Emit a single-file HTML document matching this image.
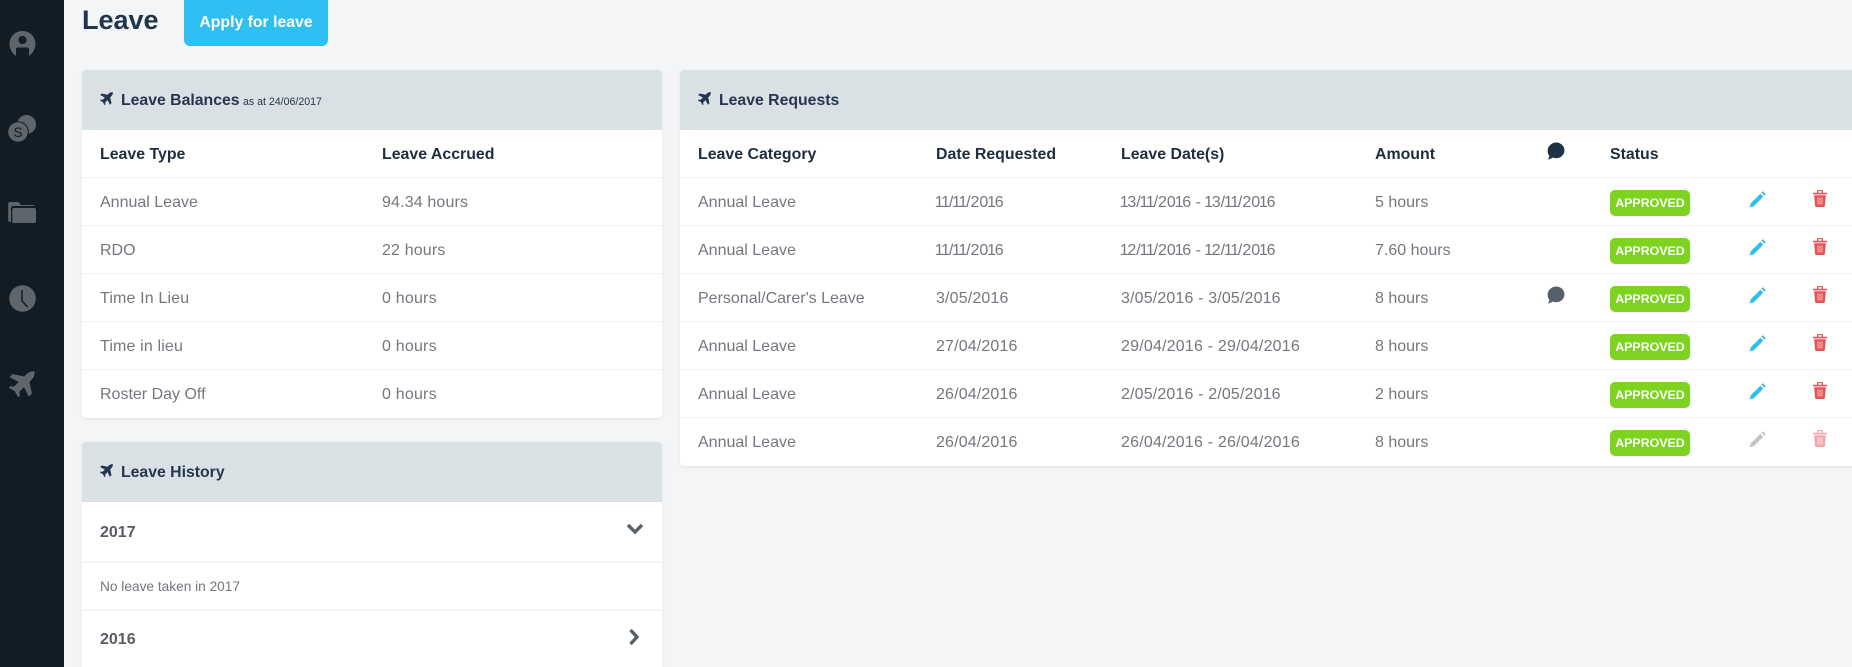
<!DOCTYPE html>
<html lang="en">
<head>
<meta charset="utf-8">
<title>Leave</title>
<style>
html,body{margin:0;padding:0;width:1852px;height:667px;overflow:hidden;background:#f3f5f7;font-family:"Liberation Sans",Arial,sans-serif;}
*{box-sizing:border-box}
#wrap{position:relative;width:1852px;height:667px;overflow:hidden}
#side{position:absolute;left:0;top:0;width:64px;height:667px;background:#111c25}
#side svg{position:absolute}
.a{position:absolute;white-space:nowrap}
h1{position:absolute;margin:0;left:82px;top:2px;font-size:27px;line-height:36px;font-weight:700;color:#22344a}
.btn{position:absolute;left:184px;top:-6px;width:144px;height:52px;background:#2fbff2;border-radius:6px;color:#fff;font-weight:700;font-size:15.8px;line-height:58px;text-align:center}
.card{position:absolute;background:#fff;border-radius:4px;box-shadow:0 1px 3px rgba(40,50,60,.08);overflow:hidden}
.hd{position:absolute;left:0;right:0;top:0;height:60px;background:#dae1e5;color:#26364e;font-weight:700;font-size:15.8px;line-height:61px}
.hd small{font-size:10.6px;font-weight:400;margin-left:-1px}
.hd svg{position:absolute;top:20px;left:18px}
.hd b{position:absolute;left:39px;top:0}
.row{position:absolute;left:0;right:0;height:48px;border-bottom:1px solid #f0f1f3;color:#74777d;font-size:16px;line-height:49px}
.row.h{color:#1f2d3f;font-weight:700;font-size:15.9px;line-height:50px}
.row span{position:absolute;top:0;white-space:nowrap}
.row i{font-style:normal;margin:0 -1.25px}
.n3{letter-spacing:.2px}
.n4{letter-spacing:.15px}
.badge{position:absolute;left:1610px;width:80px;height:26px;background:#7ed321;border-radius:5px;color:#fff;font-weight:700;font-size:12.4px;line-height:26px;text-align:center}
.ic{position:absolute}
</style>
</head>
<body>
<svg width="0" height="0" style="position:absolute">
<defs>
<symbol id="plane" viewBox="0 0 24 24"><path transform="rotate(45 12 12)" d="M12 0C13.600 1.200 15 3.500 15 6V8.800L23 14V17.500L15 15V20L17.500 22.300V24L12 22.500 6.500 24V22.300L9 20V15L1 17.500V14L9 8.800V6C9 3.500 10.400 1.200 12 0z"/></symbol>
<symbol id="pencil" viewBox="0 0 17 17"><path d="M11.300 2.700l3 3L4.800 15.200.6 16.400l1.200-4.200zM13 .9l.9-.6 2.800 2.800-.6.900-.6.600-3-3z"/></symbol>
<symbol id="trash" viewBox="0 0 14 17"><path fill="currentColor" d="M0 2.800h4V1c0-.5.400-1 1-1h4c.6 0 1 .5 1 1v1.800h4v1.600H0zM5.300 1.100v1.700h3.400V1.100zM1.200 5.200h11.600L12 15.600c0 .8-.6 1.400-1.400 1.400H3.400c-.8 0-1.400-.6-1.400-1.400z"/><path fill="#f3c39c" d="M4.500 7.500h1v7h-1zM6.500 7.500h1v7h-1zM8.500 7.500h1v7h-1z"/></symbol>
<symbol id="bubble" viewBox="0 0 17 17"><path d="M8.800.5c4.200 0 7.700 3.300 7.700 7.400s-3.500 7.400-7.700 7.400c-1.200 0-2.300-.3-3.300-.7-1.100.9-2.700 1.700-4.800 1.900.9-1.100 1.400-2.200 1.500-3.400C.9 11.600.6 9.900.6 8c0-4.100 4-7.500 8.200-7.500z"/></symbol>
</defs>
</svg>
<div id="wrap">
<div id="side">
  <svg style="left:9px;top:31px" width="27" height="25" viewBox="0 0 27 25"><path fill="#5e656b" d="M13.500 0C20.700 0 26.500 5.700 26.500 12.800c0 4.800-2.300 9-5.800 11.700H20V18c0-1-.8-1.500-1.500-1.500h-10C7.800 16.500 7 17 7 18v6.500H6.300C2.800 21.800.5 17.600.5 12.800.5 5.700 6.300 0 13.500 0z"/><circle cx="13.500" cy="9" r="4.100" fill="#111c25"/></svg>
  <svg style="left:8px;top:114px" width="29" height="28" viewBox="0 0 29 28"><circle cx="18.500" cy="10.500" r="9.500" fill="#5e656b"/><circle cx="10" cy="18" r="10.800" fill="#111c25"/><circle cx="10" cy="18" r="9.800" fill="#5e656b"/><text x="10" y="23" text-anchor="middle" font-family="Liberation Sans" font-size="13.500" fill="#111c25">S</text></svg>
  <svg style="left:8px;top:201px" width="29" height="23" viewBox="0 0 29 23"><path fill="#5e656b" d="M2 1h7.500c.8 0 1.300.3 1.800.9L13 4h12c1 0 1.500.3 1.800 1H5.500C4 5 3 6 3 7.500V21H2c-1 0-1.800-.8-1.800-1.800V2.800C.2 1.800 1 1 2 1z"/><rect x="4.300" y="7" width="23.700" height="15" rx="1.800" fill="#5e656b"/></svg>
  <svg style="left:9px;top:285px" width="27" height="27" viewBox="0 0 27 27"><circle cx="13.500" cy="13.500" r="13.300" fill="#5e656b"/><path d="M13 5v11l5.700 6" fill="none" stroke="#111c25" stroke-width="1.500"/></svg>
  <svg style="left:9px;top:367px" width="30" height="30" viewBox="0 0 24 24" fill="#5e656b"><use href="#plane"/></svg>
</div>

<h1>Leave</h1>
<div class="btn">Apply for leave</div>

<div class="card" style="left:82px;top:70px;width:580px;height:348px">
  <div class="hd"><svg width="15" height="15" fill="#26364e"><use href="#plane"/></svg><b>Leave Balances <small>as at 24/06/2017</small></b></div>
  <div class="row h" style="top:60px"><span style="left:18px">Leave Type</span><span style="left:300px">Leave Accrued</span></div>
  <div class="row" style="top:108px"><span style="left:18px">Annual Leave</span><span style="left:300px" class="n4">94.34 hours</span></div>
  <div class="row" style="top:156px"><span style="left:18px">RDO</span><span style="left:300px" class="n4">22 hours</span></div>
  <div class="row" style="top:204px"><span style="left:18px" class="n4">Time In Lieu</span><span style="left:300px" class="n3">0 hours</span></div>
  <div class="row" style="top:252px"><span style="left:18px" class="n4">Time in lieu</span><span style="left:300px" class="n3">0 hours</span></div>
  <div class="row" style="top:300px;border:0"><span style="left:18px">Roster Day Off</span><span style="left:300px" class="n3">0 hours</span></div>
</div>

<div class="card" style="left:82px;top:442px;width:580px;height:225px;border-radius:4px 4px 0 0">
  <div class="hd"><svg width="15" height="15" fill="#26364e"><use href="#plane"/></svg><b>Leave History</b></div>
  <div class="a" style="left:0;right:0;top:119px;height:2px;background:#f3f4f6"></div>
  <div class="a" style="left:0;right:0;top:167px;height:2px;background:#f3f4f6"></div>
  <div class="a" style="left:18px;top:72px;line-height:38px;font-size:16px;font-weight:700;color:#575c63">2017</div>
  <div class="a" style="left:18px;top:122px;line-height:46px;font-size:13.700px;color:#74777d">No leave taken in 2017</div>
  <div class="a" style="left:18px;top:179px;line-height:38px;font-size:16px;font-weight:700;color:#575c63">2016</div>
  <svg class="ic" style="left:544px;top:81px" width="18" height="12" viewBox="0 0 18 12"><path d="M2 2l7 7 7-7" fill="none" stroke="#5a6068" stroke-width="3.400"/></svg>
  <svg class="ic" style="left:546px;top:186px" width="12" height="18" viewBox="0 0 12 18"><path d="M2.500 2l6.500 7-6.500 7" fill="none" stroke="#5a6068" stroke-width="3.400"/></svg>
</div>

<div class="card" style="left:680px;top:70px;width:1180px;height:396px">
  <div class="hd"><svg width="15" height="15" fill="#26364e"><use href="#plane"/></svg><b>Leave Requests</b></div>
  <div class="row h" style="top:60px"><span style="left:18px">Leave Category</span><span style="left:256px">Date Requested</span><span style="left:441px">Leave Date(s)</span><span style="left:695px">Amount</span><span style="left:930px">Status</span></div>
  <div class="row" style="top:108px"><span style="left:18px">Annual Leave</span><span style="left:256px"><i>1</i><i>1</i>/<i>1</i><i>1</i>/20<i>1</i>6</span><span style="left:441px"><i>1</i>3/<i>1</i><i>1</i>/20<i>1</i>6 - <i>1</i>3/<i>1</i><i>1</i>/20<i>1</i>6</span><span style="left:695px">5 hours</span></div>
  <div class="row" style="top:156px"><span style="left:18px">Annual Leave</span><span style="left:256px"><i>1</i><i>1</i>/<i>1</i><i>1</i>/20<i>1</i>6</span><span style="left:441px"><i>1</i>2/<i>1</i><i>1</i>/20<i>1</i>6 - <i>1</i>2/<i>1</i><i>1</i>/20<i>1</i>6</span><span style="left:695px">7.60 hours</span></div>
  <div class="row" style="top:204px"><span style="left:18px">Personal/Carer's Leave</span><span style="left:256px" class="n4">3/05/2016</span><span style="left:441px" class="n4">3/05/2016 - 3/05/2016</span><span style="left:695px">8 hours</span></div>
  <div class="row" style="top:252px"><span style="left:18px">Annual Leave</span><span style="left:256px" class="n4">27/04/2016</span><span style="left:441px" class="n3">29/04/2016 - 29/04/2016</span><span style="left:695px">8 hours</span></div>
  <div class="row" style="top:300px"><span style="left:18px">Annual Leave</span><span style="left:256px" class="n4">26/04/2016</span><span style="left:441px" class="n4">2/05/2016 - 2/05/2016</span><span style="left:695px">2 hours</span></div>
  <div class="row" style="top:348px;border:0"><span style="left:18px">Annual Leave</span><span style="left:256px" class="n4">26/04/2016</span><span style="left:441px" class="n3">26/04/2016 - 26/04/2016</span><span style="left:695px">8 hours</span></div>
</div>

<svg class="ic" style="left:1547px;top:142px" width="18" height="18" fill="#1f3347"><use href="#bubble"/></svg>
<svg class="ic" style="left:1547px;top:286px" width="18" height="18" fill="#575f6b"><use href="#bubble"/></svg>

<div class="badge" style="top:190px">APPROVED</div>
<div class="badge" style="top:238px">APPROVED</div>
<div class="badge" style="top:286px">APPROVED</div>
<div class="badge" style="top:334px">APPROVED</div>
<div class="badge" style="top:382px">APPROVED</div>
<div class="badge" style="top:430px">APPROVED</div>

<svg class="ic" style="left:1749px;top:191px" width="17" height="17" fill="#2fbff2"><use href="#pencil"/></svg>
<svg class="ic" style="left:1749px;top:239px" width="17" height="17" fill="#2fbff2"><use href="#pencil"/></svg>
<svg class="ic" style="left:1749px;top:287px" width="17" height="17" fill="#2fbff2"><use href="#pencil"/></svg>
<svg class="ic" style="left:1749px;top:335px" width="17" height="17" fill="#2fbff2"><use href="#pencil"/></svg>
<svg class="ic" style="left:1749px;top:383px" width="17" height="17" fill="#2fbff2"><use href="#pencil"/></svg>
<svg class="ic" style="left:1749px;top:431px" width="17" height="17" fill="#c4c4c4"><use href="#pencil"/></svg>

<svg class="ic" style="left:1813px;top:190px;color:#e8505f" width="14" height="17"><use href="#trash"/></svg>
<svg class="ic" style="left:1813px;top:238px;color:#e8505f" width="14" height="17"><use href="#trash"/></svg>
<svg class="ic" style="left:1813px;top:286px;color:#e8505f" width="14" height="17"><use href="#trash"/></svg>
<svg class="ic" style="left:1813px;top:334px;color:#e8505f" width="14" height="17"><use href="#trash"/></svg>
<svg class="ic" style="left:1813px;top:382px;color:#e8505f" width="14" height="17"><use href="#trash"/></svg>
<svg class="ic" style="left:1813px;top:430px;color:#e8505f;opacity:.5" width="14" height="17"><use href="#trash"/></svg>
</div>
</body>
</html>
